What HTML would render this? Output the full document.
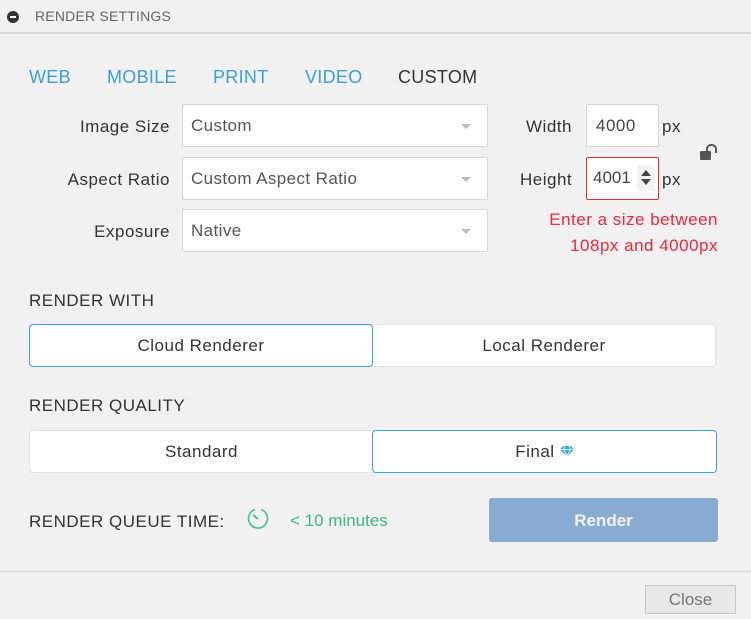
<!DOCTYPE html>
<html><head><style>
body{margin:0;width:751px;height:619px;background:#f1f1f1;font-family:"Liberation Sans",sans-serif;position:relative;overflow:hidden;color:#333}
.a{position:absolute;white-space:nowrap}
.t{font-size:17px;letter-spacing:0.5px}
.sel{position:absolute;left:182px;width:306px;height:43px;background:#fff;border:1px solid #d6d6d6;border-radius:2px;box-sizing:border-box;font-size:17px;letter-spacing:0.4px;color:#555;line-height:42px;padding-left:8px}
.sel:after{content:"";position:absolute;right:16px;top:19px;border:5px solid transparent;border-top:5px solid #bbb}
.lbl{position:absolute;font-size:17px;letter-spacing:0.5px;color:#333;text-align:right;width:170px;left:0}
.tab{position:absolute;top:67px;font-size:18px;letter-spacing:0.3px;color:#3a9fdc}
.btn{position:absolute;height:43px;background:#fff;box-sizing:border-box;text-align:center;line-height:41px;font-size:17px;letter-spacing:0.5px;color:#333;border:1px solid #e2e2e2}
.on{border:1.5px solid #3aa0dc;border-radius:4px;z-index:2}
</style></head><body>
<div class="a" style="left:0;top:0;width:751px;height:32px;border-bottom:2px solid #d8d8d8"></div>
<div class="a" style="left:7px;top:11px;width:12px;height:12px;border-radius:50%;background:#333"><div style="position:absolute;left:3px;top:5px;width:6px;height:2px;background:#fff"></div></div>
<div class="a" style="left:35px;top:8px;font-size:14px;letter-spacing:0.2px;color:#666">RENDER SETTINGS</div>
<div class="tab" style="left:29px">WEB</div>
<div class="tab" style="left:107px">MOBILE</div>
<div class="tab" style="left:213px">PRINT</div>
<div class="tab" style="left:305px">VIDEO</div>
<div class="tab" style="left:398px;color:#333">CUSTOM</div>
<div class="lbl" style="top:117px">Image Size</div>
<div class="lbl" style="top:170px">Aspect Ratio</div>
<div class="lbl" style="top:222px">Exposure</div>
<div class="sel" style="top:104px">Custom</div>
<div class="sel" style="top:157px">Custom Aspect Ratio</div>
<div class="sel" style="top:209px">Native</div>
<div class="a t" style="left:526px;top:117px">Width</div>
<div class="a t" style="left:520px;top:170px">Height</div>
<div class="a t" style="left:586px;top:104px;width:73px;height:43px;background:#fff;border:1px solid #d6d6d6;box-sizing:border-box;border-radius:2px;color:#444;line-height:41px;padding-left:9px">4000</div>
<div class="a t" style="left:586px;top:157px;width:73px;height:43px;background:#fff;border:1.5px solid #e83030;box-sizing:border-box;border-radius:2px;color:#444;line-height:40px;padding-left:6px;letter-spacing:0">4001<div style="position:absolute;left:50px;top:7px;width:18px;height:26px;background:#f2f2f2"><div style="position:absolute;left:4px;top:5px;border:5px solid transparent;border-bottom:6px solid #444;border-top:0"></div><div style="position:absolute;left:4px;top:14px;border:5px solid transparent;border-top:6px solid #444;border-bottom:0"></div></div></div>
<div class="a t" style="left:662px;top:117px">px</div>
<div class="a t" style="left:662px;top:170px">px</div>
<div class="a" style="left:700px;top:151px;width:11px;height:9px;background:#555;border-radius:1px"></div>
<div class="a" style="left:706px;top:144px;width:7px;height:7px;border:2px solid #555;border-bottom:0;border-radius:5px 5px 0 0"></div>
<div class="a t" style="left:480px;top:207px;width:238px;text-align:right;color:#f2263a;line-height:26px">Enter a size between<br>108px and 4000px</div>
<div class="a t" style="left:29px;top:291px">RENDER WITH</div>
<div class="btn on" style="left:29px;top:324px;width:344px">Cloud Renderer</div>
<div class="btn" style="left:372px;top:324px;width:344px;border-radius:0 4px 4px 0">Local Renderer</div>
<div class="a t" style="left:29px;top:396px">RENDER QUALITY</div>
<div class="btn" style="left:29px;top:430px;width:345px;border-radius:4px 0 0 4px">Standard</div>
<div class="btn on" style="left:372px;top:430px;width:345px">Final <svg width="14" height="12" viewBox="0 0 14 12" style="vertical-align:0"><path d="M3 1h8l3 3.5-7 7-7-7z" fill="#3aa8e0"/><path d="M0 4.5h14M5 1l-1.5 3.5L7 11 10.5 4.5 9 1" stroke="#fff" stroke-width="0.8" fill="none"/></svg></div>
<div class="a t" style="left:29px;top:512px">RENDER QUEUE TIME:</div>
<svg class="a" style="left:245px;top:506px" width="26" height="26" viewBox="0 0 26 26"><path d="M10 3.5A9.5 9.5 0 1 0 16 3.5" fill="none" stroke="#4cc08a" stroke-width="1.6"/><path d="M8 9l5 4" stroke="#4cc08a" stroke-width="2"/></svg>
<div class="a" style="left:290px;top:511px;font-size:17px;color:#3cb87a">&lt; 10 minutes</div>
<div class="a" style="left:489px;top:498px;width:229px;height:44px;background:#8aabd1;border-radius:3px;color:#eef3f9;font-size:17px;font-weight:bold;text-align:center;line-height:46px">Render</div>
<div class="a" style="left:0;top:571px;width:751px;height:1px;background:#d6d6d6"></div>
<div class="a" style="left:645px;top:585px;width:89px;height:27px;background:#e8e8e8;border:1px solid #c8c8c8;font-size:17px;color:#777;text-align:center;line-height:27px">Close</div>
</body></html>
